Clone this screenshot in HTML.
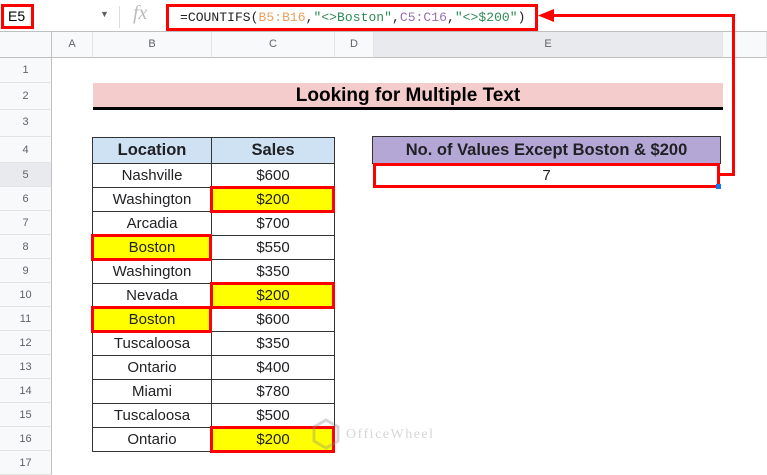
<!DOCTYPE html>
<html><head><style>
body{margin:0;width:767px;height:472px;overflow:hidden;background:#fff;font-family:"Liberation Sans",Arial,sans-serif;position:relative}
div{position:absolute;box-sizing:border-box}
.rh{left:0;width:52px;background:#f8f9fa;border-bottom:1px solid #e2e3e3;border-right:1px solid #c0c0c0;color:#5f6368;font-size:11px;text-align:center}
.ch{top:32px;height:26px;background:#f8f9fa;border-right:1px solid #e2e3e3;border-bottom:1px solid #c0c0c0;color:#5f6368;font-size:11px;text-align:center;line-height:25px}
.c{border:1px solid #333;text-align:center;font-size:15px;color:#202124}
.y{background:#ffff00}
.r{border:3px solid #f00!important}
</style></head><body>
<div style="left:0;top:0;width:767px;height:32px;background:#fff;border-bottom:1px solid #c0c0c0"></div>
<div style="left:1px;top:4px;width:33px;height:25px;border:3px solid #f00;font-size:14px;line-height:19px;padding-left:4px">E5</div>
<div style="left:100px;top:9px;font-size:9px;color:#5f6368">▼</div>
<div style="left:119px;top:6px;width:1px;height:22px;background:#ddd"></div>
<div style="left:133px;top:2px;font-family:'Liberation Serif',serif;font-style:italic;font-size:20px;color:#bbb">fx</div>
<div style="left:166px;top:4px;width:372px;height:27px;border:3px solid #f00;font-family:'Liberation Mono',monospace;font-size:13px;line-height:21px;padding-left:11px;color:#222;letter-spacing:0.05px;white-space:nowrap;overflow:hidden">=COUNTIFS(<span style="color:#e8a15c">B5:B16</span>,<span style="color:#2e8b57">"&lt;&gt;Boston"</span>,<span style="color:#9a6fb0">C5:C16</span>,<span style="color:#2e8b57">"&lt;&gt;$200"</span>)</div>
<div class="ch" style="left:0;width:52px;border-right:1px solid #c0c0c0"></div>
<div class="ch" style="left:52px;width:41px">A</div>
<div class="ch" style="left:93px;width:119px">B</div>
<div class="ch" style="left:212px;width:123px">C</div>
<div class="ch" style="left:335px;width:39px">D</div>
<div class="ch" style="left:374px;width:349px;background:#e8eaed">E</div>
<div class="ch" style="left:723px;width:44px"></div>
<div class="rh" style="top:58px;height:25px;line-height:25px">1</div>
<div class="rh" style="top:83px;height:27px;line-height:27px">2</div>
<div class="rh" style="top:110px;height:27px;line-height:24px">3</div>
<div class="rh" style="top:137px;height:26px;line-height:26px">4</div>
<div class="rh" style="top:163px;height:24px;line-height:24px;background:#e8eaed">5</div>
<div class="rh" style="top:187px;height:24px;line-height:24px">6</div>
<div class="rh" style="top:211px;height:24px;line-height:24px">7</div>
<div class="rh" style="top:235px;height:24px;line-height:24px">8</div>
<div class="rh" style="top:259px;height:24px;line-height:24px">9</div>
<div class="rh" style="top:283px;height:24px;line-height:24px">10</div>
<div class="rh" style="top:307px;height:24px;line-height:24px">11</div>
<div class="rh" style="top:331px;height:24px;line-height:24px">12</div>
<div class="rh" style="top:355px;height:24px;line-height:24px">13</div>
<div class="rh" style="top:379px;height:24px;line-height:24px">14</div>
<div class="rh" style="top:403px;height:24px;line-height:24px">15</div>
<div class="rh" style="top:427px;height:24px;line-height:24px">16</div>
<div class="rh" style="top:451px;height:24px;line-height:24px">17</div>
<div style="left:93px;top:83px;width:630px;height:27px;background:#f4cccc;border-bottom:3px solid #000;font-weight:bold;font-size:19px;text-align:center;line-height:25px">Looking for Multiple Text</div>
<div class="c" style="left:92px;top:137px;width:120px;height:27px;background:#cfe2f3;font-weight:bold;font-size:16.5px;line-height:25px">Location</div>
<div class="c" style="left:211px;top:137px;width:124px;height:27px;background:#cfe2f3;font-weight:bold;font-size:16.5px;line-height:25px">Sales</div>
<div id="rows"></div>
<script>
var d=[["Nashville","$600"],["Washington","$200",0,1],["Arcadia","$700"],["Boston","$550",1,0],["Washington","$350"],["Nevada","$200",0,1],["Boston","$600",1,0],["Tuscaloosa","$350"],["Ontario","$400"],["Miami","$780"],["Tuscaloosa","$500"],["Ontario","$200",0,1]];
var h="";d.forEach(function(r,i){var t=163+i*24;
h+='<div class="c'+(r[2]?' y':'')+'" style="left:92px;top:'+t+'px;width:120px;height:25px;line-height:23px">'+r[0]+'</div>';
h+='<div class="c'+(r[3]?' y':'')+'" style="left:211px;top:'+t+'px;width:124px;height:25px;line-height:23px">'+r[1]+'</div>';});
d.forEach(function(r,i){var t=163+i*24;
if(r[2])h+='<div class="r" style="left:91px;top:'+(t-1)+'px;width:121px;height:27px"></div>';
if(r[3])h+='<div class="r" style="left:210px;top:'+(t-1)+'px;width:125px;height:27px"></div>';});
document.getElementById("rows").outerHTML=h;
</script>
<div class="c" style="left:372px;top:136px;width:349px;height:28px;background:#b4a7d6;font-weight:bold;font-size:16.5px;line-height:26px">No. of Values Except Boston &amp; $200</div>
<div class="c r" style="left:373px;top:163px;width:347px;height:25px;line-height:19px">7</div>
<div style="left:716px;top:184px;width:5px;height:5px;background:#1a73e8"></div>
<div style="left:720px;top:173px;width:15px;height:3px;background:#f00"></div>
<div style="left:732px;top:14px;width:3px;height:162px;background:#f00"></div>
<div style="left:548px;top:14px;width:187px;height:3px;background:#f00"></div>
<svg style="position:absolute;left:538px;top:8px" width="16" height="15"><polygon points="0,7.5 16,1 16,14" fill="#f00"/></svg>
<div style="left:308px;top:415px;width:150px;height:40px;opacity:.35;color:#888;font-family:'Liberation Serif',serif;font-size:14px;letter-spacing:1.5px;padding:12px 0 0 38px">OfficeWheel</div>
<svg style="position:absolute;left:312px;top:418px;opacity:.35" width="28" height="32"><polygon points="14,2 26,9 26,23 14,30 2,23 2,9" fill="none" stroke="#888" stroke-width="3"/></svg>
</body></html>
